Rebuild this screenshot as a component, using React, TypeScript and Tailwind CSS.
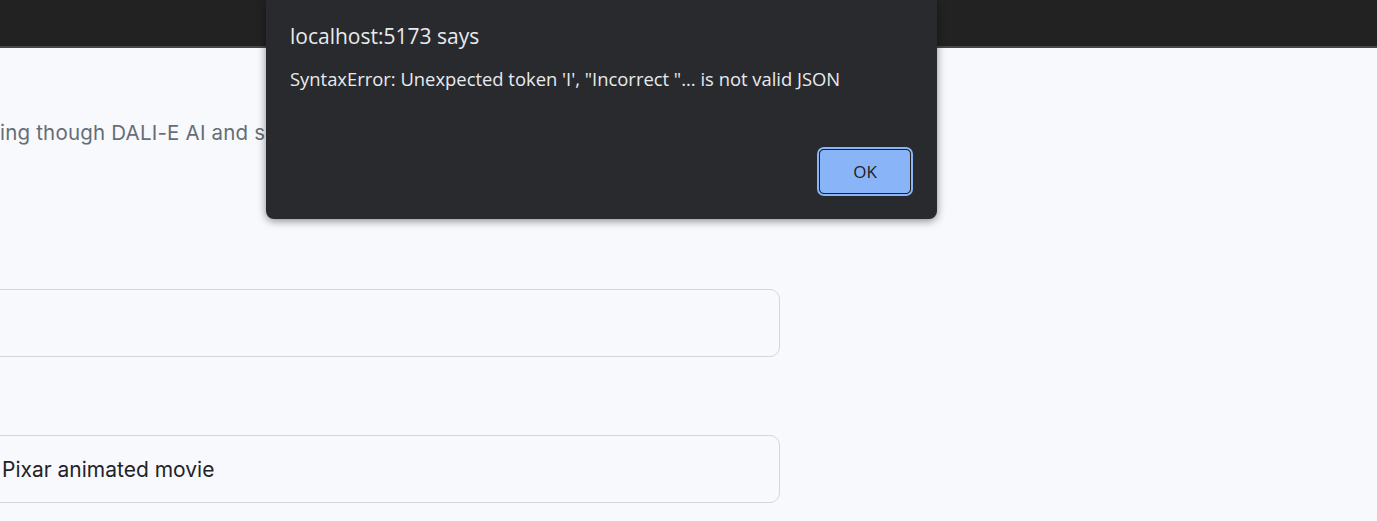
import React from 'react';

export default function App() {
  return (
    <div className="relative h-[521px] w-[1377px] overflow-hidden bg-[#f8f9fd] font-['Inter',sans-serif]">
      <div className="h-[48px] border-b-2 border-[#474747] bg-[#222222]" />

      <main className="-ml-[14px] pt-[73px]">
        <p className="ml-[14px] whitespace-nowrap text-[20.5px] leading-[24px] tracking-[0.2px] text-[#666e75]">
          ing though DALI-E AI and share them with the community
        </p>

        <form className="mt-[144px] flex w-[794px] flex-col gap-[78px]">
          <input
            type="text"
            className="h-[68px] w-full rounded-[10px] border border-[#d4d6dc] bg-[#f8f9fd] px-[15px] text-[21px] text-[#222328] outline-none"
          />
          <input
            type="text"
            defaultValue="Pixar animated movie"
            className="h-[68px] w-full rounded-[10px] border border-[#d4d6dc] bg-[#f8f9fd] px-[15px] text-[21px] text-[#222328] outline-none"
          />
        </form>
      </main>

      <div className="absolute left-[266px] top-0 h-[219px] w-[671px] rounded-b-[8px] bg-[#292a2d] px-[24px] pt-[22px] font-['Open_Sans',sans-serif] shadow-[0_2px_8px_rgba(0,0,0,0.45)]">
        <h2 className="text-[21px] leading-[28px] text-[#e8eaed]">localhost:5173 says</h2>
        <p className="mt-[17px] whitespace-nowrap text-[18.4px] leading-[24px] text-[#e8eaed]">
          SyntaxError: Unexpected token 'I', "Incorrect "... is not valid JSON
        </p>
        <div className="absolute bottom-[23px] right-[24px]">
          <button className="h-[49px] w-[96px] rounded-[7px] border-2 border-[#8ab4f8] bg-[#202124] p-0">
            <span className="flex h-full w-full items-center justify-center rounded-[5px] border-[1.5px] border-[#202124] bg-[#8ab4f8] text-[17px] text-[#202124]">
              OK
            </span>
          </button>
        </div>
      </div>
    </div>
  );
}
